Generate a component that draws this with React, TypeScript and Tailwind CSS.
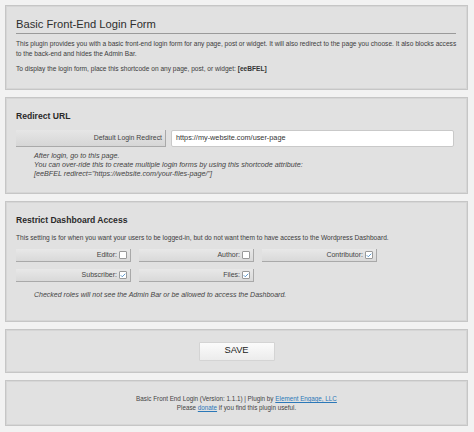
import { Check } from "lucide-react";

const font = { fontFamily: '"Liberation Sans", Arial, sans-serif' };

function Panel({ className = "", children }: { className?: string; children: React.ReactNode }) {
  return (
    <section className={`bg-[#e1e1e1] border border-[#c6c6c6] shadow-[inset_0_0_0_1px_#d6d6d6] ${className}`}>
      {children}
    </section>
  );
}

function RoleBox({ label, checked }: { label: string; checked: boolean }) {
  return (
    <label className="w-[115px] h-[13px] flex items-center justify-end gap-[2px] pr-[3px] bg-gradient-to-b from-[#e8e8e8] to-[#d9d9d9] border-r border-b border-[#a9a9a9] text-[7px] text-[#444]">
      <span>{label}:</span>
      <span className="h-[8px] w-[8px] bg-white border border-[#9a9a9a] rounded-[1px] flex items-center justify-center">
        {checked && <Check className="h-[7px] w-[7px] text-[#2f7bbf]" strokeWidth={3} />}
      </span>
    </label>
  );
}

export default function App() {
  return (
    <div style={font} className="w-[474px] h-[432px] overflow-hidden bg-[#f2f2f2] pt-[5px] pl-[5px] pr-[6px] flex flex-col gap-[7px] text-[#3c3c3c]">
      {/* Intro */}
      <Panel className="h-[85px] px-[10px] pt-[11px]">
        <h1 className="text-[11.2px] leading-[15px] text-[#2e2e2e] border-b border-[#9a9a9a] pb-[1px] mr-[1px]">
          Basic Front-End Login Form
        </h1>
        <p className="text-[6.6px] leading-[10px] mt-[5px]">
          This plugin provides you with a basic front-end login form for any page, post or widget. It will also redirect to the page you choose. It also blocks access to the back-end and hides the Admin Bar.
        </p>
        <p className="text-[6.6px] leading-[10px] mt-[5px]">
          To display the login form, place this shortcode on any page, post, or widget: <b className="text-[#333]">[eeBFEL]</b>
        </p>
      </Panel>

      {/* Redirect */}
      <Panel className="h-[97px] px-[10px] pt-[12px]">
        <h2 className="text-[8.6px] leading-[12px] font-bold text-[#2a2a2a]">Redirect URL</h2>
        <div className="flex items-center gap-[5px] mt-[8px]">
          <div className="w-[150px] h-[17px] flex items-center justify-end pr-[3px] bg-gradient-to-b from-[#e6e6e6] to-[#d6d6d6] border-r border-b border-[#a9a9a9] text-[6.9px] text-[#444]">
            Default Login Redirect
          </div>
          <div className="w-[283px] h-[17px] flex items-center pl-[4px] bg-white border border-[#c9c9c9] rounded-[2px] text-[7.3px] text-[#333]">
            https://my-website.com/user-page
          </div>
        </div>
        <div className="pl-[18px] mt-[4px] text-[7.2px] leading-[9px] italic text-[#444]">
          <p>After login, go to this page.</p>
          <p>You can over-ride this to create multiple login forms by using this shortcode attribute:</p>
          <p>[eeBFEL redirect="https://website.com/your-files-page/"]</p>
        </div>
      </Panel>

      {/* Restrict */}
      <Panel className="h-[121px] px-[10px] pt-[12px]">
        <h2 className="text-[8.6px] leading-[12px] font-bold text-[#2a2a2a]">Restrict Dashboard Access</h2>
        <p className="text-[6.6px] leading-[10px] mt-[7px]">
          This setting is for when you want your users to be logged-in, but do not want them to have access to the Wordpress Dashboard.
        </p>
        <div className="grid grid-cols-[115px_115px_115px] gap-x-[8px] gap-y-[7px] mt-[6px]">
          <RoleBox label="Editor" checked={false} />
          <RoleBox label="Author" checked={false} />
          <RoleBox label="Contributor" checked />
          <RoleBox label="Subscriber" checked />
          <RoleBox label="Files" checked />
        </div>
        <p className="pl-[18px] mt-[8px] text-[7px] leading-[9px] italic text-[#444]">
          Checked roles will not see the Admin Bar or be allowed to access the Dashboard.
        </p>
      </Panel>

      {/* Save */}
      <Panel className="h-[44px] flex items-center justify-center">
        <button className="w-[76px] h-[19px] bg-gradient-to-b from-[#fbfbfb] to-[#ececec] border border-[#d4d4d4] rounded-[1px] text-[9.3px] text-[#222]">
          SAVE
        </button>
      </Panel>

      {/* Footer */}
      <Panel className="h-[46px] flex flex-col items-center justify-center text-[6.3px] leading-[9px] text-[#444]">
        <p>
          Basic Front End Login (Version: 1.1.1) | Plugin by{" "}
          <a href="#" className="text-[#2b78b8] underline">Element Engage, LLC</a>
        </p>
        <p>
          Please <a href="#" className="text-[#2b78b8] underline">donate</a> if you find this plugin useful.
        </p>
      </Panel>
    </div>
  );
}
